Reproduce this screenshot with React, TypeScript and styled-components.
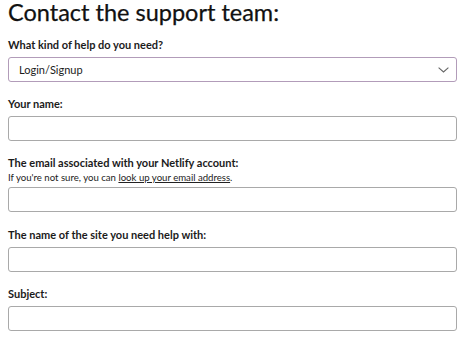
import React from "react";
import styled, { createGlobalStyle } from "styled-components";

const Global = createGlobalStyle`
  html, body { margin: 0; padding: 0; background: #fff; }
  body { font-family: Lato, "Noto Sans", sans-serif; color: #1b1b1b; }
`;

const Page = styled.form`
  padding: 0 17px 0 8px;
  display: flex;
  flex-direction: column;
`;

const Title = styled.h1`
  margin: 0 0 14px;
  font-family: Lato, sans-serif;
  font-weight: 400;
  font-size: 23.5px;
  line-height: 24px;
  color: #111;
  -webkit-text-stroke: 0.25px #111;
`;

const Field = styled.div<{ $gap?: number }>`
  display: flex;
  flex-direction: column;
  margin-bottom: ${(p) => p.$gap ?? 15}px;
`;

const Label = styled.label<{ $mb?: number }>`
  font-family: Lato, sans-serif;
  font-weight: 700;
  font-size: 11px;
  line-height: 13px;
  margin-bottom: ${(p) => p.$mb ?? 6}px;
`;

const Hint = styled.div`
  font-size: 9.6px;
  line-height: 12px;
  margin-bottom: 3px;
  color: #222;
  a { color: inherit; }
`;

const SelectBox = styled.div`
  height: 25px;
  border: 1.5px solid #b29cb9;
  border-radius: 3px;
  box-sizing: border-box;
  display: flex;
  align-items: center;
  padding: 0 7px 0 10px;
  font-size: 11px;
`;

const Chevron = styled.svg`
  margin-left: auto;
  width: 11px;
  height: 6px;
`;

const Input = styled.input`
  height: 25px;
  box-sizing: border-box;
  border: 1.5px solid #a9a9a9;
  border-radius: 3px;
  background: #fff;
  font: inherit;
  padding: 0 8px;
`;

export default function App() {
  return (
    <>
      <Global />
      <Page>
        <Title>Contact the support team:</Title>
        <Field>
          <Label>What kind of help do you need?</Label>
          <SelectBox>
            Login/Signup
            <Chevron viewBox="0 0 11 6">
              <path d="M0.6 0.6 L5.5 5 L10.4 0.6" fill="none" stroke="#666" strokeWidth="1.1" />
            </Chevron>
          </SelectBox>
        </Field>
        <Field>
          <Label>Your name:</Label>
          <Input />
        </Field>
        <Field $gap={16}>
          <Label $mb={3}>The email associated with your Netlify account:</Label>
          <Hint>
            If you're not sure, you can <a href="#">look up your email address</a>.
          </Hint>
          <Input />
        </Field>
        <Field>
          <Label>The name of the site you need help with:</Label>
          <Input />
        </Field>
        <Field>
          <Label>Subject:</Label>
          <Input />
        </Field>
      </Page>
    </>
  );
}
